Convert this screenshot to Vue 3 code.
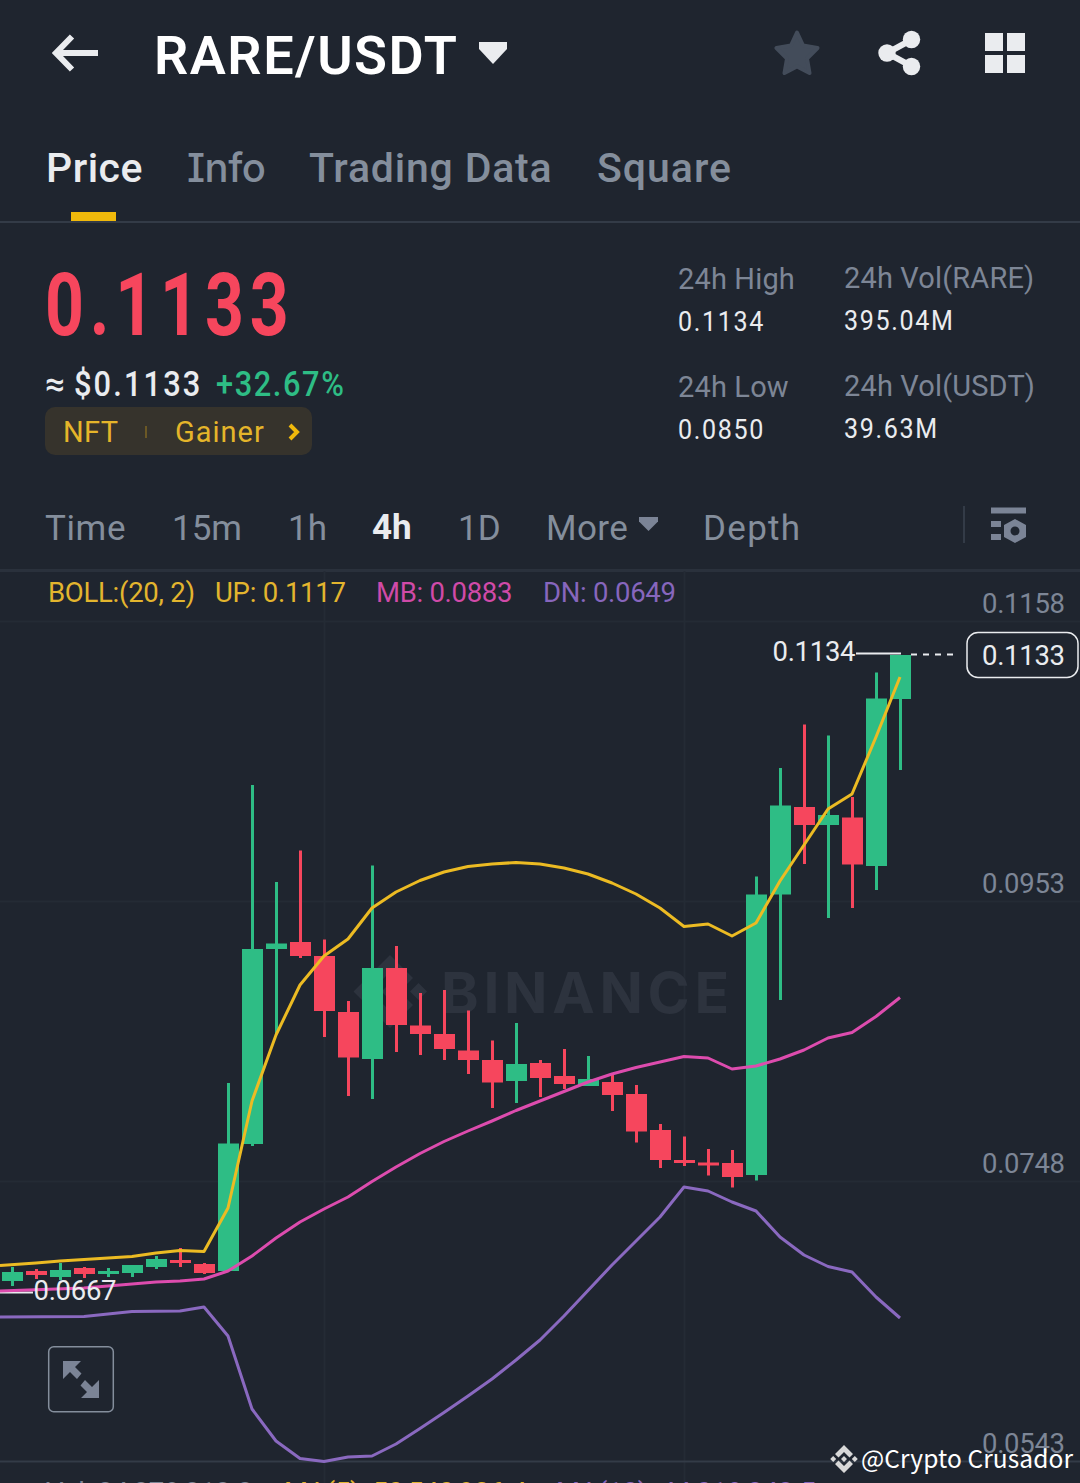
<template>
  <div class="pair-page">
    <header class="top-bar">
      <svg class="back" width="46" height="38" viewBox="0 0 46 38" fill="none" stroke="#eaecef" stroke-width="6"><path d="M4 19H46M20 2.500L4 19L20 35.500"/></svg>
      <h1 class="pair-name">RARE/USDT</h1>
      <svg class="caret" width="28" height="22" viewBox="0 0 28 22" fill="#eaecef"><path d="M0 0H28V7L14 22L0 7Z"/></svg>
      <div class="top-actions">
        <svg width="46" height="46" viewBox="0 0 46 46" fill="#434c5a" stroke="#434c5a" stroke-width="4" stroke-linejoin="round"><path d="M23 2.500L29 15.500L43.500 18L33 28.500L35.500 43L23 36.500L10.500 43L13 28.500L2.500 18L17 15.500Z"/></svg>
        <svg width="44" height="48" viewBox="0 0 44 48" fill="#eaecef"><path d="M35 10.500L10 24L35 37.500" fill="none" stroke="#eaecef" stroke-width="6"/><circle cx="34.500" cy="10.500" r="8.700"/><circle cx="10" cy="24" r="8.700"/><circle cx="34.500" cy="37.500" r="8.700"/></svg>
        <svg width="40" height="40" viewBox="0 0 40 40" fill="#eaecef"><path d="M0 0H18V18H0ZM22 0H40V18H22ZM0 22H18V40H0ZM22 22H40V40H22Z"/></svg>
      </div>
    </header>

    <nav class="tabs">
      <span v-for="tab in tabs" :key="tab.name" class="tab" :class="[tab.cls, { active: tab.name === activeTab }]">{{ tab.name }}</span>
    </nav>

    <section class="summary">
      <div class="price-block">
        <div class="last-price">0.1133</div>
        <div class="fiat-row">
          <span class="fiat">≈ <span class="fiat-value">$0.1133</span></span>
          <span class="change">+32.67%</span>
        </div>
        <div class="tags">
          <span class="tag-nft">NFT</span>
          <i class="tag-sep"></i>
          <span class="tag-gainer">Gainer</span>
          <svg width="12" height="18" viewBox="0 0 12 18" fill="none" stroke="#f0b90b" stroke-width="4"><path d="M2 2L9 9L2 16"/></svg>
        </div>
      </div>
      <div class="stats">
        <div v-for="(col, i) in stats" :key="i" class="stat-col">
          <div v-for="item in col" :key="item.label" class="stat">
            <div class="stat-label">{{ item.label }}</div>
            <div class="stat-value">{{ item.value }}</div>
          </div>
        </div>
      </div>
    </section>

    <nav class="intervals">
      <span class="iv iv-time">Time</span>
      <span class="iv iv-15m">15m</span>
      <span class="iv iv-1h">1h</span>
      <span class="iv iv-4h selected">4h</span>
      <span class="iv iv-1d">1D</span>
      <span class="iv iv-more">More</span>
      <svg class="more-caret" width="19" height="14" viewBox="0 0 19 14" fill="#7b8496"><path d="M0 0H19V4.500L9.500 14L0 4.500Z"/></svg>
      <span class="iv iv-depth">Depth</span>
      <i class="iv-divider"></i>
      <svg class="iv-settings" width="36" height="37" viewBox="0 0 36 37" fill="#7b8496"><path d="M0 0.500H35V6.500H0ZM0 14H10V20H0ZM0 27H10V33H0Z"/><path fill-rule="evenodd" d="M24 12L35 18V30L24 36L13 30V18ZM24 19.500A4.500 4.500 0 1 0 24 28.500A4.500 4.500 0 1 0 24 19.500Z"/></svg>
    </nav>

    <svg class="chart" width="1080" height="914" viewBox="0 569 1080 914">
      <g class="grid">
        <path class="grid-top" d="M0 570.500H1080"/>
        <path d="M0 621.500H1080M0 901.500H1080M0 1181.500H1080M324.500 571V1483M684.500 571V1483"/>
        <path class="grid-bottom" d="M0 1461.500H1080"/>
      </g>

      <g class="brand">
        <path d="M390 955L413 978L404.500 986.500L390 972L375.500 986.500L367 978ZM390 1028L413 1005L404.500 996.500L390 1011L375.500 996.500L367 1005ZM390 983L398.500 991.500L390 1000L381.500 991.500ZM362 983L370.500 991.500L362 1000L353.500 991.500ZM418.500 983L427 991.500L418.500 1000L410 991.500Z"/>
        <text x="441" y="1012.500" textLength="288">BINANCE</text>
      </g>

      <g v-for="c in candles" :key="c.x" :class="c.up ? 'up' : 'down'">
        <rect class="wick" :x="c.x - 1" :y="c.high" width="3" :height="c.low - c.high"/>
        <rect :x="c.x - 10" :y="c.top" width="21" :height="c.bottom - c.top"/>
      </g>

      <path class="marker" d="M856 653.500H901M0 1292.500H33"/>
      <path class="last-dash" d="M911 654.500H955"/>

      <polyline v-for="l in lines" :key="l.name" class="band" :class="l.name" :points="l.points"/>

      <g class="labels">
        <text x="48" y="602" textLength="147" class="c-up">BOLL:(20, 2)</text>
        <text x="215" y="602" textLength="131" class="c-up">UP: 0.1117</text>
        <text x="376" y="602" textLength="136.500" class="c-mb">MB: 0.0883</text>
        <text x="543" y="602" textLength="133" class="c-dn">DN: 0.0649</text>
        <text v-for="a in axis" :key="a.y" x="982" :y="a.y" textLength="83" class="c-axis">{{ a.value }}</text>
        <text x="772.500" y="661" textLength="83" class="c-light">0.1134</text>
        <text x="33.500" y="1300" textLength="83" class="c-light">0.0667</text>
        <rect class="pill" x="967" y="632.500" width="111" height="45" rx="11"/>
        <text x="982" y="665" textLength="83" class="c-light">0.1133</text>
        <text x="46" y="1501.500" textLength="207" class="c-axis">Vol: 24,278,212.2</text>
        <text x="284" y="1501.500" textLength="243" class="c-up">MA(5): 50,540,936.4</text>
        <text x="556" y="1501.500" textLength="260" class="c-dn">MA(10): 44,018,242.5</text>
      </g>

      <g class="expand">
        <rect x="48.700" y="1346.700" width="64.600" height="65" rx="5"/>
        <path d="M63 1361H81L75 1367L81.500 1373.500L77 1379L70 1372L63 1379ZM99 1398H81L87 1392L80.500 1385.500L85 1380L92 1387L99 1380Z"/>
      </g>

      <g class="credit">
        <path d="M844 1445L853 1454L849.500 1457.500L844 1452L838.500 1457.500L835 1454ZM844 1473L853 1464L849.500 1460.500L844 1466L838.500 1460.500L835 1464ZM844 1456L847 1459L844 1462L841 1459ZM833.200 1456L836.200 1459L833.200 1462L830.200 1459ZM854.800 1456L857.800 1459L854.800 1462L851.800 1459Z"/>
        <text x="861" y="1468" textLength="212">@Crypto Crusador</text>
      </g>
    </svg>
  </div>
</template>

<script setup>
const activeTab = 'Price'
const tabs = [
  { name: 'Price', cls: 'tab-price' },
  { name: 'Info', cls: 'tab-info' },
  { name: 'Trading Data', cls: 'tab-data' },
  { name: 'Square', cls: 'tab-square' }
]

const stats = [
  [
    { label: '24h High', value: '0.1134' },
    { label: '24h Low', value: '0.0850' }
  ],
  [
    { label: '24h Vol(RARE)', value: '395.04M' },
    { label: '24h Vol(USDT)', value: '39.63M' }
  ]
]

const axis = [
  { y: 613, value: '0.1158' },
  { y: 893, value: '0.0953' },
  { y: 1173, value: '0.0748' },
  { y: 1453, value: '0.0543' }
]

// [up, high, body top, body bottom, low], one candle every 24px
const candles = [
  [1, 1267, 1272, 1281, 1286],
  [0, 1269, 1271, 1275, 1279],
  [1, 1263, 1270, 1277, 1280],
  [0, 1267, 1268, 1274, 1278],
  [1, 1268, 1271, 1274, 1277],
  [1, 1265, 1265, 1273, 1277],
  [1, 1256, 1259, 1267, 1269],
  [0, 1248, 1260, 1263, 1267],
  [0, 1263, 1264, 1273, 1274],
  [1, 1083, 1143.5, 1271, 1271],
  [1, 785, 949, 1144, 1146],
  [1, 882, 943.5, 949, 1034],
  [0, 850.5, 942, 956, 958],
  [0, 939.5, 956, 1011, 1037],
  [0, 1001, 1012, 1057.5, 1096],
  [1, 865.5, 968, 1059, 1099],
  [0, 946, 968, 1025, 1052],
  [0, 993, 1025.5, 1034, 1055],
  [0, 990, 1034, 1049, 1060],
  [0, 1010.5, 1050.5, 1060, 1074],
  [0, 1040.5, 1060, 1082.5, 1108],
  [1, 1023, 1064, 1081, 1103],
  [0, 1060, 1063, 1078, 1097],
  [0, 1049, 1076, 1084, 1089],
  [1, 1056, 1079, 1086, 1086],
  [0, 1073, 1082, 1095, 1111],
  [0, 1085, 1094, 1131.5, 1142.5],
  [0, 1124, 1130, 1160, 1168],
  [0, 1136.5, 1160, 1163, 1166],
  [0, 1149, 1162.5, 1165.5, 1175.5],
  [0, 1150, 1163, 1177, 1187.5],
  [1, 876.5, 894.5, 1175, 1180.5],
  [1, 768, 805.5, 894.5, 1000],
  [0, 724.5, 807, 825, 864],
  [1, 735.5, 815, 825, 918],
  [0, 797, 817.5, 864.5, 908],
  [1, 672.5, 698.5, 866, 890],
  [1, 655, 655, 699, 770]
].map(([up, high, top, bottom, low], i) => ({ x: 12 + i * 24, up, high, top, bottom, low }))

const lines = [
  { name: 'dn', points: '0,1317 84,1316.5 132,1311.5 180,1311 204,1307 228,1336 252,1409 276,1441 300,1458.5 324,1461.5 348,1457 372,1456 396,1444 420,1428.5 444,1412.5 468,1396 492,1379 516,1360 540,1340 564,1316 588,1290.5 612,1265 636,1241 660,1217 684,1187 708,1191 732,1202 756,1211 780,1237 804,1255 828,1266.5 852,1272 876,1297 900,1318' },
  { name: 'mb', points: '0,1291 84,1288 132,1284 156,1282 180,1281 204,1279 228,1271 252,1256 276,1238 300,1222 324,1209 348,1197 372,1181.5 396,1167 420,1153.5 444,1141.5 468,1131 492,1121 516,1110.5 540,1101 564,1091.5 588,1082 612,1074 636,1067.5 660,1062 684,1056.5 708,1058 732,1069 756,1066 780,1059 804,1050 828,1038 852,1032.5 876,1016.5 900,997.5' },
  { name: 'bu', points: '0,1265.5 36,1263 60,1261 84,1259.5 108,1258 132,1256.5 156,1253 180,1250.5 204,1251.5 228,1208 252,1101 276,1035 300,985 324,956 348,939 372,908 396,892 420,880.5 444,872 468,866.5 492,864 516,862.5 540,864 564,868 588,874 612,883 636,894 660,908 684,926.5 708,924 732,936 756,923 780,881 804,845 828,809 852,794 876,737 900,677' }
]
</script>

<style>
body {
  margin: 0;
  background: #1f252f;
}
</style>

<style scoped>
.pair-page {
  width: 1080px;
  height: 1483px;
  overflow: hidden;
  background: #1f252f;
  color: #eaecef;
  font-family: Roboto, "Noto Sans", sans-serif;
}

.pair-page svg {
  display: block;
  flex-shrink: 0;
}

.top-bar {
  display: flex;
  align-items: center;
  height: 106px;
  padding: 0 55px 0 52px;
}

.pair-name {
  margin: 5px 0 0 56px;
  width: 325px;
  font-size: 54px;
  font-weight: 600;
  line-height: 60px;
  letter-spacing: 1.5px;
  color: #fff;
  white-space: nowrap;
}

.top-actions {
  display: flex;
  align-items: center;
  margin-left: auto;
}

.top-actions svg {
  margin-left: 64px;
}

.top-actions svg:nth-child(2) {
  margin-left: 57px;
}

.tabs {
  display: flex;
  box-sizing: border-box;
  height: 117px;
  padding-left: 46px;
  border-bottom: 2px solid #333b47;
}

.tab {
  position: relative;
  padding-top: 37px;
  font-size: 41px;
  font-weight: 500;
  line-height: 50px;
  white-space: nowrap;
  color: #848e9c;
}

.tab-price {
  width: 141px;
  letter-spacing: 0.5px;
}

/* serifed capital I */
.tab-info {
  width: 122px;
  font-family: Inter, sans-serif;
  font-size: 40px;
  font-feature-settings: "cv08";
  letter-spacing: -0.5px;
}

.tab-data {
  width: 288px;
  letter-spacing: 0.8px;
}

.tab-square {
  letter-spacing: 1px;
}

.tab.active {
  color: #eaecef;
}

.tab.active::after {
  content: "";
  position: absolute;
  left: 25px;
  bottom: 0;
  width: 45px;
  height: 9px;
  background: #f0b90b;
}

.summary {
  display: flex;
  justify-content: space-between;
  height: 257px;
}

.price-block {
  padding-left: 45px;
}

.last-price {
  margin-top: 37px;
  width: 300px;
  font-size: 87px;
  font-weight: 700;
  line-height: 90px;
  letter-spacing: 7.5px;
  color: #f6465d;
  transform: scaleX(0.78);
  transform-origin: left;
}

.fiat-row {
  display: flex;
  height: 57px;
  font-size: 35px;
  font-weight: 500;
  line-height: 69px;
}

.fiat {
  width: 171px;
  white-space: nowrap;
}

.fiat-value,
.change {
  display: inline-block;
  letter-spacing: 2.4px;
  transform: scaleX(0.88);
  transform-origin: left;
}

.change {
  letter-spacing: 1.8px;
  color: #2ebd85;
}

.tags {
  display: flex;
  align-items: center;
  box-sizing: border-box;
  width: 267px;
  height: 48px;
  padding: 1px 12px 0 18px;
  border-radius: 10px;
  background: #36332c;
  font-size: 29px;
  color: #e5b52a;
}

.tag-nft {
  width: 82px;
  letter-spacing: 0.4px;
}

.tag-sep {
  width: 2px;
  height: 12px;
  background: #6b5825;
}

.tag-gainer {
  width: 113px;
  margin-left: 28px;
  letter-spacing: 1px;
}

.stats {
  display: flex;
  padding-top: 35px;
}

.stat-col {
  width: 166px;
}

.stat-col:last-child {
  width: 236px;
  margin-top: -1px;
}

.stat {
  height: 108px;
  white-space: nowrap;
}

.stat-label {
  font-size: 29px;
  line-height: 42px;
  letter-spacing: 0.15px;
  color: #7d8696;
}

.stat-value {
  font-size: 28.5px;
  line-height: 43px;
  letter-spacing: 1.9px;
  transform: scaleX(0.88);
  transform-origin: left;
}

.intervals {
  display: flex;
  height: 89px;
  padding-left: 45px;
}

.iv {
  padding-top: 28px;
  font-size: 35px;
  line-height: 42px;
  white-space: nowrap;
  color: #848e9c;
}

.iv.selected {
  padding-top: 27px;
  font-weight: 700;
  color: #eaecef;
}

.iv-time {
  width: 127px;
  letter-spacing: 0.6px;
}

.iv-15m {
  width: 116px;
}

.iv-1h {
  width: 84px;
}

.iv-4h {
  width: 86px;
}

.iv-1d {
  width: 88px;
}

.iv-more {
  width: 93px;
  letter-spacing: 0.4px;
}

.more-caret {
  margin-top: 37px;
}

.iv-depth {
  margin-left: 45px;
  width: 260px;
  letter-spacing: 1.3px;
}

.iv-divider {
  width: 2px;
  height: 37px;
  margin: 26px 26px 0 0;
  background: #333b47;
}

.iv-settings {
  margin-top: 27px;
}

.grid path {
  stroke: #242b35;
  stroke-width: 2;
}

.grid .grid-top {
  stroke: #2a313c;
  stroke-width: 3;
}

.grid .grid-bottom {
  stroke: #333b47;
}

.brand {
  fill: #2d333e;
  font-family: Inter, sans-serif;
  font-size: 57px;
  font-weight: 700;
}

.up {
  fill: #2ebd85;
}

.down {
  fill: #f6465d;
}

.marker {
  stroke: #eaecef;
  stroke-width: 2;
}

.last-dash {
  stroke: #eaecef;
  stroke-width: 2;
  stroke-dasharray: 6 6;
}

.band {
  fill: none;
  stroke-width: 3;
  stroke-linejoin: round;
}

.bu {
  stroke: #ecbb23;
}

.mb {
  stroke: #dd4cae;
}

.dn {
  stroke: #8a69c0;
}

.labels {
  font-size: 27.5px;
}

.c-up {
  fill: #e3b52e;
}

.c-mb {
  fill: #d04aa8;
}

.c-dn {
  fill: #8766bd;
}

.c-axis {
  fill: #7d8696;
}

.c-light {
  fill: #eaecef;
}

.pill {
  fill: #1f252f;
  stroke: #eaecef;
  stroke-width: 1.5;
}

.expand rect {
  fill: none;
  stroke: #848e9c;
  stroke-width: 1.5;
}

.expand path {
  fill: #7b8496;
}

.credit {
  fill: #fff;
  font-family: "Noto Sans CJK SC", sans-serif;
  font-size: 24.5px;
}

.credit path {
  fill: #d8d8d8;
}
</style>
